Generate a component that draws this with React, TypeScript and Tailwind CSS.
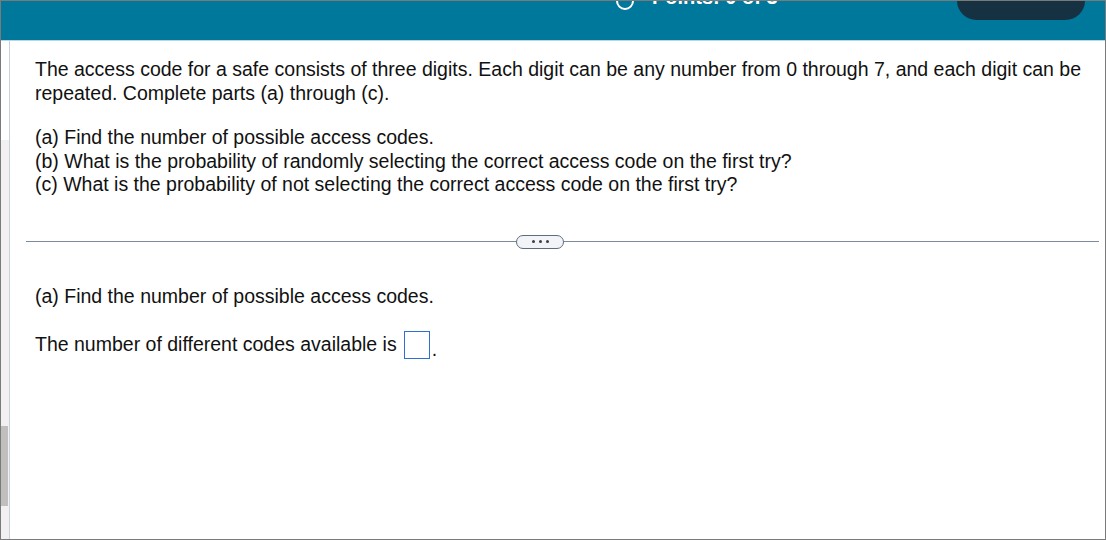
import React from "react";

export default function App() {
  const font = { fontFamily: '"Liberation Sans", Arial, sans-serif' };
  return (
    <div className="w-[1106px] h-[540px] overflow-hidden bg-white" style={font}>
      <div className="w-full h-full border border-[#7a7a7a] flex flex-col">
        {/* header */}
        <div className="relative h-[40px] shrink-0 bg-[#00789b] overflow-hidden border-b border-[#b9d6e4]">
          <div className="absolute left-[615px] top-[-9px] w-[18px] h-[18px] rounded-full border-2 border-white" />
          <div className="absolute left-[651px] top-[-14px] text-white text-[20px] font-bold leading-[20px] whitespace-nowrap">
            Points: 0 of 3
          </div>
          <div className="absolute left-[956px] top-[-20px] w-[128px] h-[39px] rounded-[20px] bg-[#163142]" />
        </div>
        <div className="flex flex-1 min-h-0">
          {/* left scroll strip */}
          <div className="w-[9px] shrink-0 flex flex-col border-r border-[#c9d1e0]">
            <div className="h-[99px] bg-white" />
            <div className="flex-1 bg-[#f2f0f0] flex flex-col">
              <div className="h-[286px]" />
              <div className="h-[80px] w-[7px] bg-[#c1bebe]" />
            </div>
          </div>
          {/* content */}
          <div className="flex-1 min-w-0 text-[19.5px] leading-[23.5px] text-[#111111]">
            <div className="pl-[25px] pr-[12px] pt-[17px]">
              <p>
                The access code for a safe consists of three digits. Each digit can be any number from 0 through 7, and each digit can be repeated. Complete parts (a) through (c).
              </p>
              <p className="mt-[21px]">(a) Find the number of possible access codes.</p>
              <p>(b) What is the probability of randomly selecting the correct access code on the first try?</p>
              <p>(c) What is the probability of not selecting the correct access code on the first try?</p>
            </div>
            <div className="mt-[38px] ml-[16px] mr-[6px] flex items-center">
              <div className="w-[490px] h-px bg-[#7d8a9c]" />
              <div className="w-[48px] h-[14px] rounded-full border border-[#5d6c82] bg-[#f2f4f7] flex items-center justify-center gap-[4px]">
                <span className="w-[3px] h-[3px] rounded-full bg-[#3a3f47]" />
                <span className="w-[3px] h-[3px] rounded-full bg-[#3a3f47]" />
                <span className="w-[3px] h-[3px] rounded-full bg-[#3a3f47]" />
              </div>
              <div className="flex-1 h-px bg-[#7d8a9c]" />
            </div>
            <div className="pl-[25px] pt-[36px]">
              <p>(a) Find the number of possible access codes.</p>
              <div className="mt-[23px] flex items-center">
                <span>The number of different codes available is</span>
                <span className="ml-[7px] w-[26px] h-[28px] border border-[#2f6fd3] bg-white inline-block" />
                <span className="ml-[2px] self-end leading-[20px]">.</span>
              </div>
            </div>
          </div>
        </div>
      </div>
    </div>
  );
}
